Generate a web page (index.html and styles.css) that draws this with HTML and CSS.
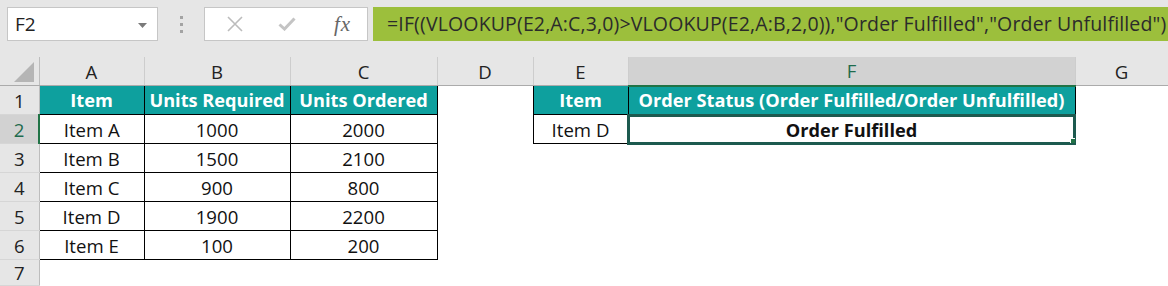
FILE: index.html
```html
<!DOCTYPE html>
<html lang="en">
<head>
    <meta charset="UTF-8">
    <title>Order Status - VLOOKUP</title>
    <link rel="stylesheet" href="styles.css">
</head>
<body>
    <div class="toolbar">
        <div class="name-box">
            <span>F2</span>
            <svg class="name-arrow" width="9" height="5" viewBox="0 0 9 5"><path d="M0 0h9L4.5 5z" fill="#7a7a7a"/></svg>
        </div>
        <div class="grip">
            <i></i><i></i><i></i>
        </div>
        <div class="fx-buttons">
            <svg class="icon-cancel" width="16" height="16" viewBox="0 0 16 16"><path d="M1 1L15 15M15 1L1 15" stroke="#bcbcbc" stroke-width="1.6" fill="none"/></svg>
            <svg class="icon-enter" width="18" height="14" viewBox="0 0 18 14"><path d="M1.5 7.5L6.5 12L16.5 1.5" stroke="#c4c4c4" stroke-width="3" fill="none"/></svg>
            <span class="fx">fx</span>
        </div>
        <div class="formula">=IF((VLOOKUP(E2,A:C,3,0)&gt;VLOOKUP(E2,A:B,2,0)),"Order Fulfilled","Order Unfulfilled")</div>
    </div>

    <table class="sheet">
        <colgroup>
            <col style="width:39px">
            <col style="width:105px">
            <col style="width:146px">
            <col style="width:147px">
            <col style="width:96px">
            <col style="width:95px">
            <col style="width:447px">
            <col style="width:93px">
        </colgroup>
        <thead>
            <tr class="col-heads">
                <th class="corner">
                    <svg width="22" height="22" viewBox="0 0 22 22"><path d="M21 1V21H1z" fill="#b5b5b5"/></svg>
                </th>
                <th>A</th>
                <th>B</th>
                <th>C</th>
                <th>D</th>
                <th>E</th>
                <th class="sel">F</th>
                <th>G</th>
            </tr>
        </thead>
        <tbody>
            <tr>
                <th class="row-head">1</th>
                <td class="hd">Item</td>
                <td class="hd">Units Required</td>
                <td class="hd">Units Ordered</td>
                <td></td>
                <td class="hd">Item</td>
                <td class="hd hd-f">Order Status (Order Fulfilled/Order Unfulfilled)</td>
                <td></td>
            </tr>
            <tr>
                <th class="row-head sel">2</th>
                <td class="cell">Item A</td>
                <td class="cell">1000</td>
                <td class="cell">2000</td>
                <td></td>
                <td class="cell">Item D</td>
                <td class="cell active"><b>Order Fulfilled</b></td>
                <td></td>
            </tr>
            <tr>
                <th class="row-head">3</th>
                <td class="cell">Item B</td>
                <td class="cell">1500</td>
                <td class="cell">2100</td>
                <td></td><td></td><td></td><td></td>
            </tr>
            <tr>
                <th class="row-head">4</th>
                <td class="cell">Item C</td>
                <td class="cell">900</td>
                <td class="cell">800</td>
                <td></td><td></td><td></td><td></td>
            </tr>
            <tr>
                <th class="row-head">5</th>
                <td class="cell">Item D</td>
                <td class="cell">1900</td>
                <td class="cell">2200</td>
                <td></td><td></td><td></td><td></td>
            </tr>
            <tr>
                <th class="row-head">6</th>
                <td class="cell">Item E</td>
                <td class="cell">100</td>
                <td class="cell">200</td>
                <td></td><td></td><td></td><td></td>
            </tr>
            <tr class="last-row">
                <th class="row-head">7</th>
                <td></td><td></td><td></td><td></td><td></td><td></td><td></td>
            </tr>
        </tbody>
    </table>
</body>
</html>
```

FILE: styles.css
```css
body {
    margin: 0;
    background-color: #ffffff;
    font-family: 'Open Sans', 'Noto Sans', sans-serif;
    color: #111;
    overflow: hidden;
}

/* barra de formulas */
.toolbar {
    display: flex;
    align-items: flex-start;
    height: 57px;
    padding: 7px 0 0 7px;
    box-sizing: border-box;
    background-color: #e6e6e6;
    white-space: nowrap;
}

.name-box {
    width: 151px;
    height: 34px;
    box-sizing: border-box;
    background-color: #ffffff;
    border: 1px solid #c6c6c6;
    display: flex;
    align-items: center;
    justify-content: space-between;
    padding: 0 10px 0 7px;
    font-size: 19px;
    color: #222;
}

.name-arrow {
    margin-top: 2px;
}

.grip {
    width: 46px;
    height: 34px;
    display: flex;
    flex-direction: column;
    align-items: center;
    justify-content: center;
    gap: 4px;
}

.grip i {
    display: block;
    width: 3px;
    height: 3px;
    background-color: #a3a3a3;
}

.fx-buttons {
    width: 164px;
    height: 34px;
    box-sizing: border-box;
    background-color: #ffffff;
    border: 1px solid #c6c6c6;
    display: flex;
    align-items: center;
    padding-left: 22px;
}

.icon-cancel {
    margin-right: 35px;
}

.icon-enter {
    margin-right: 38px;
}

.fx {
    font-family: 'Liberation Serif', serif;
    font-style: italic;
    font-size: 21px;
    color: #666;
    letter-spacing: 1px;
}

.formula {
    flex: 1;
    height: 34px;
    margin-left: 5px;
    background-color: #9cbf3c;
    font-size: 19.5px;
    letter-spacing: 0.15px;
    line-height: 34px;
    padding-left: 14px;
    color: #2b2b2b;
    overflow: hidden;
}

/* planilha */
.sheet {
    border-collapse: collapse;
    table-layout: fixed;
    width: 1168px;
    font-size: 18.6px;
}

.sheet th,
.sheet td {
    padding: 0;
    text-align: center;
    white-space: nowrap;
    overflow: hidden;
}

.col-heads th {
    height: 26px;
    background-color: #e6e6e6;
    font-weight: normal;
    color: #222;
    border-right: 1px solid #cdcdcd;
    border-bottom: 1px solid #ababab;
}

.col-heads th.corner {
    text-align: right;
    vertical-align: bottom;
    padding: 0 4px 2px 0;
    border-right: 1px solid #bdbdbd;
}

.col-heads th.corner svg {
    display: block;
    margin-left: auto;
}

.col-heads th.sel {
    background-color: #d2d2d2;
    color: #1e6b4d;
    border-bottom: 2px solid #217346;
}

tbody tr {
    height: 29px;
}

tbody tr.last-row {
    height: 26px;
}

.last-row .row-head {
    vertical-align: top;
    padding-top: 2px;
    line-height: 22px;
}

.row-head {
    background-color: #e6e6e6;
    font-weight: normal;
    color: #222;
    border-right: 1px solid #bdbdbd;
    border-bottom: 1px solid #d6d6d6;
}

.row-head.sel {
    background-color: #d2d2d2;
    color: #1e6b4d;
    border-right: 2px solid #217346;
}

.hd {
    background-color: #0ea09e;
    color: #ffffff;
    font-weight: bold;
    font-size: 18.2px;
    border: 1px solid #000;
}

.hd-f {
    border-top: 2px solid #217346;
}

.cell {
    border: 1px solid #000;
    color: #111;
}

.cell.active {
    position: relative;
    outline: 3px solid #1d5a4f;
    outline-offset: -2px;
}

.cell.active b {
    font-size: 18.2px;
}

.cell.active::after {
    content: '';
    position: absolute;
    right: -1px;
    bottom: -1px;
    width: 5px;
    height: 5px;
    background-color: #217346;
    border-left: 1px solid #fff;
    border-top: 1px solid #fff;
}
```
